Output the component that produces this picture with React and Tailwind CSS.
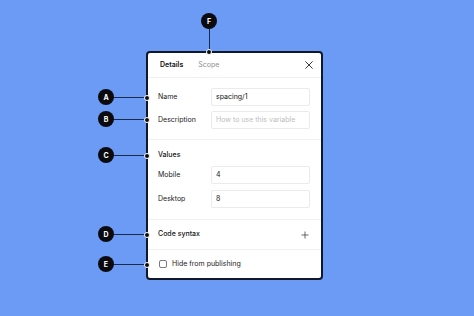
import React from "react";

function Marker({ letter, cx, cy }) {
  return (
    <div
      className="absolute w-[16px] h-[16px] rounded-full bg-[#0b0b0f] text-white flex items-center justify-center text-[7px] font-bold leading-none"
      style={{ left: cx - 8, top: cy - 8 }}
    >
      {letter}
    </div>
  );
}

function HLine({ y, x1, x2 }) {
  return (
    <>
      <div className="absolute h-[1px] bg-[#1b2a48]" style={{ left: x1, top: y, width: x2 - x1 }} />
      <div
        className="absolute w-[6px] h-[6px] rounded-full bg-[#0b0b0f] border border-white"
        style={{ left: x2 - 3, top: y - 2.5 }}
      />
    </>
  );
}

function Input({ value, placeholder }) {
  return (
    <div className="w-[99px] h-[18px] border border-[#ebebeb] rounded-[2px] flex items-center pl-[4px] text-[7px]">
      {value ? (
        <span className="text-[#141414]">{value}</span>
      ) : (
        <span className="text-[#bdbdbd]">{placeholder}</span>
      )}
    </div>
  );
}

export default function App() {
  const rows = [
    { l: "A", y: 97 },
    { l: "B", y: 119 },
    { l: "C", y: 155 },
    { l: "D", y: 234 },
    { l: "E", y: 264 },
  ];
  return (
    <div
      className="relative w-[474px] h-[316px] bg-[#6b9bf4] overflow-hidden pl-[146px] pt-[51px]"
      style={{ fontFamily: "Inter, 'Noto Sans', sans-serif" }}
    >
      <div className="w-[177px] h-[229px] bg-white border-2 border-[#111827] rounded-[4px] flex flex-col text-[#222]">
        {/* header */}
        <div className="h-[25px] shrink-0 border-b border-[#f0f0f0] flex items-center pl-[12px] pr-[8px]">
          <span className="text-[7px] font-semibold text-[#111]">Details</span>
          <span className="text-[7px] text-[#8f8f8f] ml-[15px]">Scope</span>
          <svg className="ml-auto" width="8" height="8" viewBox="0 0 8 8">
            <path d="M0.7 0.7 L7.3 7.3 M7.3 0.7 L0.7 7.3" stroke="#222" strokeWidth="0.9" strokeLinecap="round" />
          </svg>
        </div>
        {/* name / description */}
        <div className="shrink-0 border-b border-[#f0f0f0] py-[10px] pl-[10px] pr-[11px] flex flex-col gap-[5px]">
          <div className="flex items-center">
            <span className="w-[53px] text-[7px]">Name</span>
            <Input value="spacing/1" />
          </div>
          <div className="flex items-center">
            <span className="w-[53px] text-[7px]">Description</span>
            <Input placeholder="How to use this variable" />
          </div>
        </div>
        {/* values */}
        <div className="shrink-0 border-b border-[#f0f0f0] pt-[10px] pb-[11px] pl-[10px] pr-[11px] flex flex-col">
          <div className="h-[10px] flex items-center text-[7px] font-medium text-[#141414]">Values</div>
          <div className="flex items-center mt-[6px]">
            <span className="w-[53px] text-[7px]">Mobile</span>
            <Input value="4" />
          </div>
          <div className="flex items-center mt-[6px]">
            <span className="w-[53px] text-[7px]">Desktop</span>
            <Input value="8" />
          </div>
        </div>
        {/* code syntax */}
        <div className="h-[30px] shrink-0 border-b border-[#f0f0f0] flex items-center pl-[10px] pr-[12px]">
          <span className="text-[7px] font-medium text-[#141414]">Code syntax</span>
          <svg className="ml-auto" width="8" height="8" viewBox="0 0 8 8">
            <path d="M4 0.5 V7.5 M0.5 4 H7.5" stroke="#444" strokeWidth="0.8" />
          </svg>
        </div>
        {/* hide */}
        <div className="flex-1 flex items-center pl-[11px]">
          <div className="w-[8px] h-[8px] border border-[#7a7a7a] rounded-[2px]" />
          <span className="ml-[5px] text-[7px]">Hide from publishing</span>
        </div>
      </div>

      {/* annotations */}
      {rows.map((r) => (
        <HLine key={"l" + r.l} y={r.y} x1={106} x2={147} />
      ))}
      {rows.map((r) => (
        <Marker key={r.l} letter={r.l} cx={106} cy={r.y} />
      ))}
      <div className="absolute w-[1px] bg-[#1b2a48]" style={{ left: 208.5, top: 21, height: 31 }} />
      <div className="absolute w-[6px] h-[6px] rounded-full bg-[#0b0b0f] border border-white" style={{ left: 206, top: 49 }} />
      <Marker letter="F" cx={209} cy={21} />
    </div>
  );
}
